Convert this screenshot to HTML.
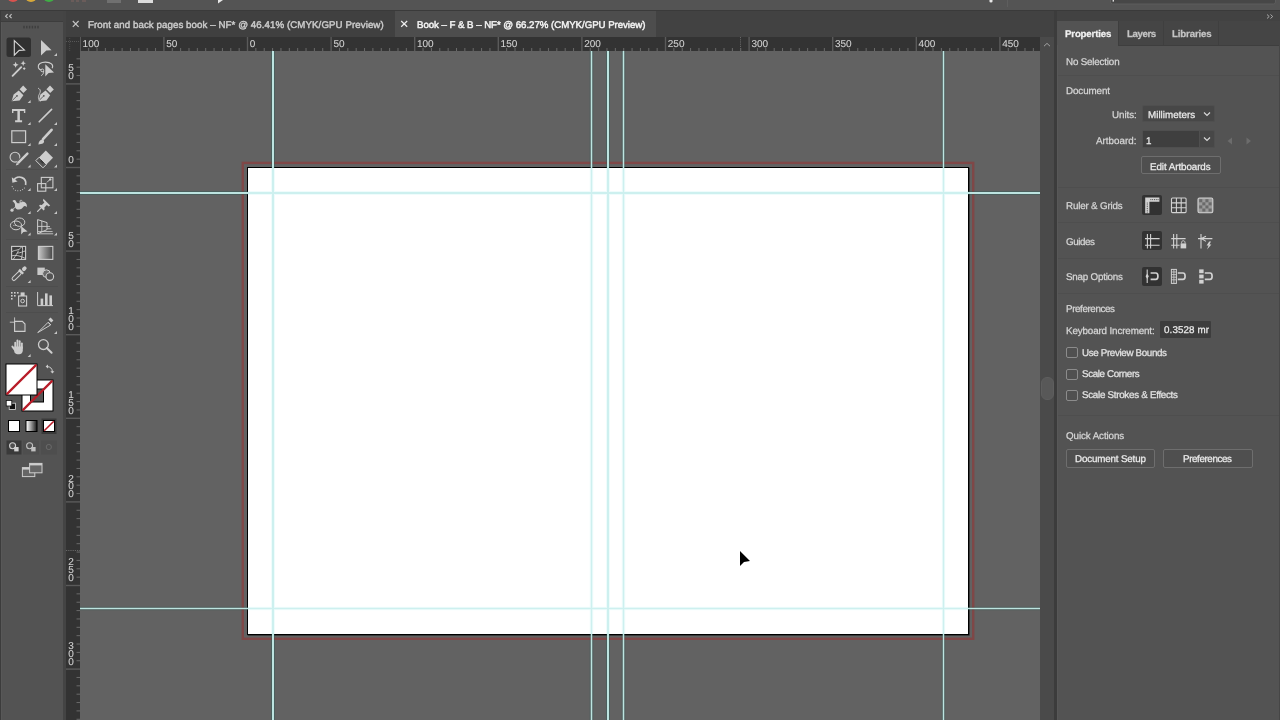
<!DOCTYPE html>
<html><head><meta charset="utf-8">
<style>
*{margin:0;padding:0;box-sizing:border-box}
html,body{width:1280px;height:720px;overflow:hidden;background:#535353;font-family:"Liberation Sans",sans-serif}
.a{position:absolute}
.rl{will-change:transform;text-rendering:geometricPrecision;font-family:"Liberation Sans",sans-serif;font-size:10px;fill:#d0d0d0;stroke:#d0d0d0;stroke-width:0.1px}
.t{position:absolute;will-change:transform;text-rendering:geometricPrecision;-webkit-text-stroke:0.25px currentColor;white-space:nowrap;color:#d8d8d8;font-size:9.5px;line-height:1}
.tb{font-weight:bold}
</style></head><body>

<!-- top app bar -->
<div class="a" style="left:0;top:0;width:1280px;height:11px;background:#545454"></div>
<div class="a" style="left:0;top:10px;width:1280px;height:1px;background:#3a3a3a"></div>
<div class="a" style="left:7px;top:-10px;width:12px;height:12px;border-radius:6px;background:#d9534f"></div>
<div class="a" style="left:25px;top:-10px;width:12px;height:12px;border-radius:6px;background:#d8a93a"></div>
<div class="a" style="left:43px;top:-10px;width:12px;height:12px;border-radius:6px;background:#3fae45"></div>

<!-- left toolbar panel -->
<div class="a" style="left:0;top:11px;width:1px;height:709px;background:#3c3c3c"></div>
<div class="a" style="left:1px;top:11px;width:62px;height:709px;background:#535353"></div>
<div class="a" style="left:1px;top:11px;width:62px;height:10px;background:#454545"></div>
<div class="a" style="left:1px;top:21px;width:62px;height:1px;background:#3d3d3d"></div>
<div class="a" style="left:63px;top:11px;width:3px;height:709px;background:#444444"></div>
<div class="a" style="left:1px;top:22px;width:1px;height:698px;background:#585858"></div>

<svg class="a" style="left:0;top:0" width="64" height="490"><path d="M7.6 14.2L5.6 16.2L7.6 18.2M11.6 14.2L9.6 16.2L11.6 18.2" stroke="#c4c4c4" stroke-width="1.1" fill="none"/>
<rect x="23.3" y="25.8" width="1.4" height="2.6" fill="#3e3e3e"/>
<rect x="26.1" y="25.8" width="1.4" height="2.6" fill="#3e3e3e"/>
<rect x="28.9" y="25.8" width="1.4" height="2.6" fill="#3e3e3e"/>
<rect x="31.7" y="25.8" width="1.4" height="2.6" fill="#3e3e3e"/>
<rect x="34.5" y="25.8" width="1.4" height="2.6" fill="#3e3e3e"/>
<rect x="37.3" y="25.8" width="1.4" height="2.6" fill="#3e3e3e"/>
<rect x="6.5" y="37.5" width="24.5" height="19.5" rx="2.5" fill="#303030"/>
<path d="M14.3 40.6L24.4 50.1L19.2 50.4L14.3 55.1Z" stroke="#d8d8d8" stroke-width="1.1" fill="none" stroke-linejoin="miter"/>
<path d="M41 40L51.6 50.2L46.3 50.5L41 55.6Z" fill="#cdcdcd"/>
<path d="M57 53L57 56L54 56Z" fill="#c4c4c4"/>
<path d="M12.6 75.8L21.2 67.2" stroke="#cdcdcd" stroke-width="1.9" stroke-linecap="round"/>
<path d="M15.6 61.8L16.5 63.9L18.6 64.8L16.5 65.7L15.6 67.8L14.7 65.7L12.6 64.8L14.7 63.9Z" fill="#cdcdcd"/>
<path d="M23.2 60.6L24 62.5L25.9 63.3L24 64.1L23.2 66L22.4 64.1L20.5 63.3L22.4 62.5Z" fill="#cdcdcd"/>
<rect x="23.2" y="67.6" width="2" height="2" fill="#cdcdcd" transform="rotate(45 24.2 68.6)"/>
<path d="M52.2 68.2C53.8 65 51 62.1 45.5 62.1C40.6 62.1 37.8 64.2 38.3 67.2C38.7 69.2 40.2 70 41.4 69.6" stroke="#cdcdcd" stroke-width="1.1" fill="none"/>
<circle cx="42.3" cy="70.4" r="1.4" fill="none" stroke="#cdcdcd" stroke-width="1"/><path d="M43.6 71C43.9 73 43 74.6 41.2 75.6" stroke="#cdcdcd" stroke-width="1" fill="none"/>
<path d="M45.3 64.2L45.3 76.4L48.6 73L54 72.4Z" fill="#cdcdcd"/>
<g transform="translate(0 0)"><path d="M11.6 101.2L13.6 94.4L18.8 90.6L23.4 95.2L19.6 100.4Z" fill="#cdcdcd"/><path d="M11.9 100.9L16.6 96.2" stroke="#535353" stroke-width="0.9"/><circle cx="17" cy="95.8" r="0.9" fill="#535353"/><path d="M19.6 89.2L23.2 85.6L27 89.4L23.4 93Z" fill="#cdcdcd"/></g>
<path d="M30.6 100L30.6 103L27.6 103Z" fill="#c4c4c4"/>
<g transform="translate(26.8 0)"><path d="M11.6 101.2L13.6 94.4L18.8 90.6L23.4 95.2L19.6 100.4Z" fill="#cdcdcd"/><path d="M11.9 100.9L16.6 96.2" stroke="#535353" stroke-width="0.9"/><circle cx="17" cy="95.8" r="0.9" fill="#535353"/><path d="M19.6 89.2L23.2 85.6L27 89.4L23.4 93Z" fill="#cdcdcd"/></g>
<path d="M38.2 88.2C41 89.5 40.6 92 39.2 94.5C37.6 97.3 38.6 100 40.8 101.2" stroke="#cdcdcd" stroke-width="1" fill="none"/>
<path d="M12 109H25.3V113H23.9V111.1H19.9V120.3H22.1V122.2H15.1V120.3H17.4V111.1H13.4V113H12Z" fill="#cdcdcd"/>
<path d="M30.6 122L30.6 125L27.6 125Z" fill="#c4c4c4"/>
<path d="M39.2 121.8L51.6 109.4" stroke="#cdcdcd" stroke-width="1.6" stroke-linecap="round"/>
<path d="M57 122L57 125L54 125Z" fill="#c4c4c4"/>
<rect x="11.8" y="130.8" width="13.8" height="11.8" fill="#5e5e5e" stroke="#cdcdcd" stroke-width="1.2"/>
<path d="M30.6 143L30.6 146L27.6 146Z" fill="#c4c4c4"/>
<path d="M43 139.2L51.6 129.8" stroke="#cdcdcd" stroke-width="2.6" stroke-linecap="round"/>
<path d="M38.4 144.4C38.6 141.6 40.4 139.2 42.6 139.6C44.4 140.1 44.6 142.2 43.2 143.3C41.9 144.2 40 144.3 38.4 144.4Z" fill="#cdcdcd"/>
<path d="M57 143L57 146L54 146Z" fill="#c4c4c4"/>
<circle cx="15" cy="157.2" r="4.9" fill="#5e5e5e" stroke="#cdcdcd" stroke-width="1.1"/>
<path d="M18.4 162.6L27.4 153.6" stroke="#535353" stroke-width="4.2"/>
<path d="M18.4 162.6L27.4 153.6" stroke="#cdcdcd" stroke-width="2.4" stroke-linecap="round"/>
<path d="M15.8 165.6L16.8 162.4L18.8 164.4Z" fill="#cdcdcd"/>
<path d="M30.6 164.5L30.6 167.5L27.6 167.5Z" fill="#c4c4c4"/>
<path d="M45.8 150.6L53 157.8L46.4 164.4L39.2 157.2Z" fill="#cdcdcd"/>
<path d="M41.6 159.6L44.2 162.2L42.6 163.8L40 161.2Z" fill="#3a3a3a"/>
<path d="M39.2 157.2L46.4 164.4L43 167.8L35.8 160.6Z" fill="none" stroke="#cdcdcd" stroke-width="1"/>
<path d="M57 164.5L57 167.5L54 167.5Z" fill="#c4c4c4"/>
<rect x="6" y="169" width="52" height="1" fill="#4d4d4d"/>
<path d="M13.6 180.2C15.4 177.4 19 176.4 22 177.6C25 178.8 26.2 182 25.6 185" stroke="#cdcdcd" stroke-width="1.7" fill="none"/>
<path d="M11.8 177.2L12.4 182.8L17.6 181.4Z" fill="#cdcdcd"/>
<circle cx="12.2" cy="186.6" r="0.55" fill="#cdcdcd"/>
<circle cx="13.4" cy="188.8" r="0.55" fill="#cdcdcd"/>
<circle cx="15.4" cy="190.2" r="0.55" fill="#cdcdcd"/>
<circle cx="17.8" cy="190.8" r="0.55" fill="#cdcdcd"/>
<circle cx="20.4" cy="190.6" r="0.55" fill="#cdcdcd"/>
<circle cx="22.6" cy="189.6" r="0.55" fill="#cdcdcd"/>
<circle cx="24.4" cy="188" r="0.55" fill="#cdcdcd"/>
<path d="M30.6 188L30.6 191L27.6 191Z" fill="#c4c4c4"/>
<rect x="41.3" y="177.4" width="11.6" height="10.4" fill="none" stroke="#cdcdcd" stroke-width="1.1"/>
<rect x="37.6" y="183.6" width="8.2" height="7.6" fill="none" stroke="#cdcdcd" stroke-width="1.1"/>
<path d="M47 182.4L50.2 179.2" stroke="#cdcdcd" stroke-width="1"/><circle cx="50.2" cy="179.4" r="1.2" fill="#cdcdcd"/>
<path d="M57 188L57 191L54 191Z" fill="#c4c4c4"/>
<path d="M12.4 201C13.6 199.6 15.4 199.8 16 201.2C16.6 202.6 17.4 203.6 19 203.4C21 203 22.4 201.4 24.4 202C26.6 202.8 27.4 205.4 26.6 207.2C25.6 205.6 24.2 205.6 23.4 206.8C22.4 208.6 20.4 210 17.4 209.4C15.4 208.8 14.6 206.6 15 205C15.2 203.4 14 202.4 12.4 201Z" fill="#cdcdcd"/>
<circle cx="12" cy="210.2" r="1.6" fill="#cdcdcd"/><path d="M12 210.2L21 201.6" stroke="#cdcdcd" stroke-width="0.9"/><circle cx="21" cy="201.4" r="1.2" fill="none" stroke="#cdcdcd" stroke-width="0.7"/>
<path d="M30.6 211L30.6 214L27.6 214Z" fill="#c4c4c4"/>
<path d="M43.4 198.8L50.2 205.6L48.6 206.4L46.8 205L44.4 207.6L44.6 209.4L43.6 210.4L39 205.8L40 204.8L41.8 205L44.4 202.6L43 200.8Z" fill="#cdcdcd"/>
<path d="M37.6 211.4L41.6 207.4" stroke="#cdcdcd" stroke-width="1.3" stroke-linecap="round"/>
<path d="M57 211L57 214L54 214Z" fill="#c4c4c4"/>
<ellipse cx="16" cy="225.4" rx="5.6" ry="4.4" fill="none" stroke="#cdcdcd" stroke-width="1"/>
<ellipse cx="19.6" cy="222.2" rx="5.2" ry="4.2" fill="none" stroke="#cdcdcd" stroke-width="1"/>
<path d="M13.4 225.4H16.2M14.6 225.4" stroke="#cdcdcd" stroke-width="1" stroke-dasharray="1 0.8"/>
<path d="M21.2 226.2L21.2 234.4L23.4 232L27.6 231.6Z" fill="#cdcdcd"/>
<path d="M30.6 232.5L30.6 235.5L27.6 235.5Z" fill="#c4c4c4"/>
<path d="M37.6 219.6L47 222.6V229.6L37.6 233.8Z" fill="none" stroke="#cdcdcd" stroke-width="1"/>
<path d="M41.8 221V232M37.6 226.4H47M47 226.6H50M47 228.8H51.4M38 231.6H52.6M37.6 233.8H53.2" stroke="#cdcdcd" stroke-width="0.9"/>
<path d="M57 232.5L57 235.5L54 235.5Z" fill="#c4c4c4"/>
<rect x="6" y="239" width="52" height="1" fill="#4d4d4d"/>
<rect x="11.6" y="246.4" width="14" height="13" fill="#3c3c3c" stroke="#cdcdcd" stroke-width="1.1"/>
<path d="M12 251.6C15 249.6 19 251 21.4 247M13.4 259C15.6 256 17.2 252.8 18.6 250.6M12 255.8C15.6 254.8 19.6 255.6 25.4 258.4M22.4 246.8C23 250.8 22.2 255 21.4 259.2M17 253C20 253.2 23 251.6 25.6 250.8" stroke="#cdcdcd" stroke-width="0.9" fill="none"/>
<defs><linearGradient id="gr" x1="0" y1="0" x2="1" y2="0"><stop offset="0" stop-color="#c8c8c8"/><stop offset="1" stop-color="#444"/></linearGradient></defs>
<rect x="38.4" y="246.4" width="14.4" height="13" fill="url(#gr)" stroke="#cdcdcd" stroke-width="1.1"/>
<rect x="11" y="274.2" width="11.2" height="3.6" rx="1.8" transform="rotate(-45 16.6 276)" fill="none" stroke="#cdcdcd" stroke-width="1"/>
<rect x="19.9" y="268.8" width="2.4" height="5.8" transform="rotate(-45 21.1 271.7)" fill="#cdcdcd"/>
<rect x="21.8" y="266.8" width="5" height="3.8" rx="1.9" transform="rotate(-45 24.3 268.7)" fill="#cdcdcd"/>
<path d="M30.6 280L30.6 283L27.6 283Z" fill="#c4c4c4"/>
<rect x="37.4" y="267.6" width="7.4" height="7.4" fill="#c8c8c8"/>
<circle cx="46.4" cy="273.6" r="3.8" fill="#6a6a6a" stroke="#cdcdcd" stroke-width="1"/>
<circle cx="49.8" cy="276.6" r="3.8" fill="#535353" stroke="#cdcdcd" stroke-width="1.1"/>
<rect x="6" y="286" width="52" height="1" fill="#4d4d4d"/>
<rect x="11" y="292" width="1.6" height="1.6" fill="#cdcdcd"/>
<rect x="14" y="292" width="1.6" height="1.6" fill="#cdcdcd"/>
<rect x="17" y="292" width="1.6" height="1.6" fill="#cdcdcd"/>
<rect x="11" y="295" width="1.6" height="1.6" fill="#cdcdcd"/>
<rect x="14" y="295" width="1.6" height="1.6" fill="#cdcdcd"/>
<rect x="11" y="298" width="1.6" height="1.6" fill="#cdcdcd"/>
<rect x="18.6" y="296" width="8" height="10" fill="none" stroke="#cdcdcd" stroke-width="1.1"/><rect x="20.6" y="292.4" width="4" height="3.6" fill="#cdcdcd"/><circle cx="22.6" cy="301" r="1.8" fill="none" stroke="#cdcdcd" stroke-width="1"/>
<path d="M37.6 292V305.6H53" stroke="#cdcdcd" stroke-width="1" fill="none"/>
<rect x="40.6" y="298.6" width="2.6" height="7" fill="#cdcdcd"/><rect x="45" y="293.4" width="2.6" height="12.2" fill="#cdcdcd"/><rect x="49.4" y="295.4" width="2.6" height="10.2" fill="#cdcdcd"/>
<rect x="6" y="312" width="52" height="1" fill="#4d4d4d"/>
<path d="M14.6 317.4V322.6M9.8 322.2H14.8" stroke="#cdcdcd" stroke-width="0.9"/>
<path d="M14.6 321.4H22.4L25 324V331.4H14.6Z" fill="#5e5e5e" stroke="#cdcdcd" stroke-width="1.1"/>
<path d="M37.8 332.6L48 322.4L50.6 325L37.8 332.6Z" fill="none" stroke="#cdcdcd" stroke-width="1"/><path d="M48.4 319.6L50.6 317.6L53.4 320.4L51.2 322.6Z" fill="#cdcdcd"/><path d="M48.2 322.2L51 325" stroke="#cdcdcd"/>
<path d="M57 331L57 334L54 334Z" fill="#c4c4c4"/>
<rect x="14.3" y="341.8" width="1.9" height="7.2" rx="0.95" fill="#cdcdcd"/>
<rect x="16.5" y="339.6" width="1.9" height="9.4" rx="0.95" fill="#cdcdcd"/>
<rect x="18.7" y="340.2" width="1.9" height="8.8" rx="0.95" fill="#cdcdcd"/>
<rect x="20.9" y="342.4" width="1.9" height="6.6" rx="0.95" fill="#cdcdcd"/>
<path d="M14.3 346.5H22.8V350.4C22.8 352.6 21.2 354.2 19.2 354.2H17.4C16 354.2 15 353.4 14.3 352Z" fill="#cdcdcd"/>
<path d="M12.4 346.6L15.4 350.6" stroke="#cdcdcd" stroke-width="1.9" stroke-linecap="round"/>
<path d="M22.6 349.4L24 346" stroke="#cdcdcd" stroke-width="0.01"/>
<path d="M30.6 354L30.6 357L27.6 357Z" fill="#c4c4c4"/>
<circle cx="43.4" cy="344.6" r="4.9" fill="none" stroke="#cdcdcd" stroke-width="1.3"/><path d="M46.8 348L51.6 352.8" stroke="#cdcdcd" stroke-width="2" stroke-linecap="round"/>
<rect x="21.5" y="379.5" width="32" height="32" fill="#000"/>
<rect x="22.5" y="380.5" width="30" height="30" fill="#fff"/>
<rect x="30" y="388.5" width="14" height="14" fill="#000"/>
<rect x="31" y="389.5" width="12" height="12" fill="#555"/>
<path d="M22.6 410.4L52.4 380.6" stroke="#b81c28" stroke-width="2.2"/>
<rect x="5.5" y="363.5" width="32" height="32" fill="#000"/>
<rect x="6.5" y="364.5" width="30" height="30" fill="#fff"/>
<path d="M6.6 394.4L36.4 364.6" stroke="#b81c28" stroke-width="2.2"/>
<path d="M47 366.6C50.4 366.6 52.4 368.6 52.4 372" stroke="#cdcdcd" stroke-width="1" fill="none"/><path d="M45.6 366.6L48 364.6V368.6Z" fill="#cdcdcd"/><path d="M52.4 373.6L50.4 371.2H54.4Z" fill="#cdcdcd"/>
<rect x="9.2" y="403.2" width="6.2" height="6.2" fill="#111" stroke="#ddd" stroke-width="0.8"/>
<rect x="6.2" y="400.4" width="5.6" height="5.6" fill="#fff" stroke="#111" stroke-width="0.8"/>
<rect x="41.5" y="418.5" width="15" height="15.5" fill="#3a3a3a"/>
<rect x="8" y="420" width="12" height="12" fill="#000"/><rect x="9" y="421" width="10" height="10" fill="#fff"/>
<defs><linearGradient id="g2" x1="0" y1="0" x2="1" y2="0"><stop offset="0" stop-color="#fff"/><stop offset="1" stop-color="#222"/></linearGradient></defs>
<rect x="25.5" y="420" width="12" height="12" fill="#000"/><rect x="26.5" y="421" width="10" height="10" fill="url(#g2)"/>
<rect x="43" y="420" width="12" height="12" fill="#000"/><rect x="44" y="421" width="10" height="10" fill="#fff"/><path d="M44.2 430.8L53.8 421.2" stroke="#b81c28" stroke-width="1.6"/>
<rect x="6.5" y="440.5" width="15" height="14" fill="#3a3a3a"/>
<rect x="23" y="440.5" width="16" height="14" fill="#4e4e4e"/>
<rect x="41" y="440.5" width="16" height="14" fill="#4e4e4e"/>
<circle cx="12.6" cy="445.8" r="3" fill="#505050" stroke="#d0d0d0" stroke-width="1.1"/><rect x="14.2" y="447" width="4.4" height="4.4" fill="#d0d0d0"/>
<circle cx="29.6" cy="445.8" r="3" fill="#505050" stroke="#c0c0c0" stroke-width="1.1"/><rect x="31.2" y="447" width="4.4" height="4.4" fill="#c0c0c0"/>
<circle cx="48.8" cy="447" r="2.6" fill="none" stroke="#6a6a6a" stroke-width="1"/>
<rect x="22.4" y="467.6" width="12.4" height="9" fill="#666" stroke="#cdcdcd" stroke-width="1"/><rect x="22.4" y="467.6" width="12.4" height="2" fill="#cdcdcd"/>
<rect x="29.6" y="463.4" width="12.4" height="9.4" fill="#666" stroke="#cdcdcd" stroke-width="1"/><rect x="29.6" y="463.4" width="12.4" height="2" fill="#cdcdcd"/></svg>
<!-- tab bar -->
<div class="a" style="left:66px;top:11px;width:988px;height:26px;background:#424242"></div>
<div class="a" style="left:66px;top:11px;width:329px;height:26px;background:#404040"></div>
<div class="a" style="left:395px;top:11px;width:261px;height:26px;background:#4d4d4d"></div>

<!-- ruler corner + rulers -->
<div class="a" style="left:66px;top:37px;width:974px;height:14px;background:#333333"></div>
<div class="a" style="left:66px;top:51px;width:14px;height:669px;background:#333333"></div>
<svg class="a" style="left:80px;top:37px" width="960" height="14"><rect x="-0.40" y="0" width="1.4" height="14" fill="#5a5a5a"/>
<text x="2.60" y="10.4" class="rl">100</text>
<rect x="8.16" y="11" width="1" height="3" fill="#6a6a6a"/>
<rect x="16.52" y="11" width="1" height="3" fill="#6a6a6a"/>
<rect x="24.88" y="11" width="1" height="3" fill="#6a6a6a"/>
<rect x="33.24" y="11" width="1" height="3" fill="#6a6a6a"/>
<rect x="41.60" y="11" width="1" height="3" fill="#6a6a6a"/>
<rect x="49.96" y="11" width="1" height="3" fill="#6a6a6a"/>
<rect x="58.32" y="11" width="1" height="3" fill="#6a6a6a"/>
<rect x="66.68" y="11" width="1" height="3" fill="#6a6a6a"/>
<rect x="75.04" y="11" width="1" height="3" fill="#6a6a6a"/>
<rect x="83.20" y="0" width="1.4" height="14" fill="#5a5a5a"/>
<text x="86.20" y="10.4" class="rl">50</text>
<rect x="91.76" y="11" width="1" height="3" fill="#6a6a6a"/>
<rect x="100.12" y="11" width="1" height="3" fill="#6a6a6a"/>
<rect x="108.48" y="11" width="1" height="3" fill="#6a6a6a"/>
<rect x="116.84" y="11" width="1" height="3" fill="#6a6a6a"/>
<rect x="125.20" y="11" width="1" height="3" fill="#6a6a6a"/>
<rect x="133.56" y="11" width="1" height="3" fill="#6a6a6a"/>
<rect x="141.92" y="11" width="1" height="3" fill="#6a6a6a"/>
<rect x="150.28" y="11" width="1" height="3" fill="#6a6a6a"/>
<rect x="158.64" y="11" width="1" height="3" fill="#6a6a6a"/>
<rect x="166.80" y="0" width="1.4" height="14" fill="#5a5a5a"/>
<text x="169.80" y="10.4" class="rl">0</text>
<rect x="175.36" y="11" width="1" height="3" fill="#6a6a6a"/>
<rect x="183.72" y="11" width="1" height="3" fill="#6a6a6a"/>
<rect x="192.08" y="11" width="1" height="3" fill="#6a6a6a"/>
<rect x="200.44" y="11" width="1" height="3" fill="#6a6a6a"/>
<rect x="208.80" y="11" width="1" height="3" fill="#6a6a6a"/>
<rect x="217.16" y="11" width="1" height="3" fill="#6a6a6a"/>
<rect x="225.52" y="11" width="1" height="3" fill="#6a6a6a"/>
<rect x="233.88" y="11" width="1" height="3" fill="#6a6a6a"/>
<rect x="242.24" y="11" width="1" height="3" fill="#6a6a6a"/>
<rect x="250.40" y="0" width="1.4" height="14" fill="#5a5a5a"/>
<text x="253.40" y="10.4" class="rl">50</text>
<rect x="258.96" y="11" width="1" height="3" fill="#6a6a6a"/>
<rect x="267.32" y="11" width="1" height="3" fill="#6a6a6a"/>
<rect x="275.68" y="11" width="1" height="3" fill="#6a6a6a"/>
<rect x="284.04" y="11" width="1" height="3" fill="#6a6a6a"/>
<rect x="292.40" y="11" width="1" height="3" fill="#6a6a6a"/>
<rect x="300.76" y="11" width="1" height="3" fill="#6a6a6a"/>
<rect x="309.12" y="11" width="1" height="3" fill="#6a6a6a"/>
<rect x="317.48" y="11" width="1" height="3" fill="#6a6a6a"/>
<rect x="325.84" y="11" width="1" height="3" fill="#6a6a6a"/>
<rect x="334.00" y="0" width="1.4" height="14" fill="#5a5a5a"/>
<text x="337.00" y="10.4" class="rl">100</text>
<rect x="342.56" y="11" width="1" height="3" fill="#6a6a6a"/>
<rect x="350.92" y="11" width="1" height="3" fill="#6a6a6a"/>
<rect x="359.28" y="11" width="1" height="3" fill="#6a6a6a"/>
<rect x="367.64" y="11" width="1" height="3" fill="#6a6a6a"/>
<rect x="376.00" y="11" width="1" height="3" fill="#6a6a6a"/>
<rect x="384.36" y="11" width="1" height="3" fill="#6a6a6a"/>
<rect x="392.72" y="11" width="1" height="3" fill="#6a6a6a"/>
<rect x="401.08" y="11" width="1" height="3" fill="#6a6a6a"/>
<rect x="409.44" y="11" width="1" height="3" fill="#6a6a6a"/>
<rect x="417.60" y="0" width="1.4" height="14" fill="#5a5a5a"/>
<text x="420.60" y="10.4" class="rl">150</text>
<rect x="426.16" y="11" width="1" height="3" fill="#6a6a6a"/>
<rect x="434.52" y="11" width="1" height="3" fill="#6a6a6a"/>
<rect x="442.88" y="11" width="1" height="3" fill="#6a6a6a"/>
<rect x="451.24" y="11" width="1" height="3" fill="#6a6a6a"/>
<rect x="459.60" y="11" width="1" height="3" fill="#6a6a6a"/>
<rect x="467.96" y="11" width="1" height="3" fill="#6a6a6a"/>
<rect x="476.32" y="11" width="1" height="3" fill="#6a6a6a"/>
<rect x="484.68" y="11" width="1" height="3" fill="#6a6a6a"/>
<rect x="493.04" y="11" width="1" height="3" fill="#6a6a6a"/>
<rect x="501.20" y="0" width="1.4" height="14" fill="#5a5a5a"/>
<text x="504.20" y="10.4" class="rl">200</text>
<rect x="509.76" y="11" width="1" height="3" fill="#6a6a6a"/>
<rect x="518.12" y="11" width="1" height="3" fill="#6a6a6a"/>
<rect x="526.48" y="11" width="1" height="3" fill="#6a6a6a"/>
<rect x="534.84" y="11" width="1" height="3" fill="#6a6a6a"/>
<rect x="543.20" y="11" width="1" height="3" fill="#6a6a6a"/>
<rect x="551.56" y="11" width="1" height="3" fill="#6a6a6a"/>
<rect x="559.92" y="11" width="1" height="3" fill="#6a6a6a"/>
<rect x="568.28" y="11" width="1" height="3" fill="#6a6a6a"/>
<rect x="576.64" y="11" width="1" height="3" fill="#6a6a6a"/>
<rect x="584.80" y="0" width="1.4" height="14" fill="#5a5a5a"/>
<text x="587.80" y="10.4" class="rl">250</text>
<rect x="593.36" y="11" width="1" height="3" fill="#6a6a6a"/>
<rect x="601.72" y="11" width="1" height="3" fill="#6a6a6a"/>
<rect x="610.08" y="11" width="1" height="3" fill="#6a6a6a"/>
<rect x="618.44" y="11" width="1" height="3" fill="#6a6a6a"/>
<rect x="626.80" y="11" width="1" height="3" fill="#6a6a6a"/>
<rect x="635.16" y="11" width="1" height="3" fill="#6a6a6a"/>
<rect x="643.52" y="11" width="1" height="3" fill="#6a6a6a"/>
<rect x="651.88" y="11" width="1" height="3" fill="#6a6a6a"/>
<rect x="660.24" y="11" width="1" height="3" fill="#6a6a6a"/>
<rect x="668.40" y="0" width="1.4" height="14" fill="#5a5a5a"/>
<text x="671.40" y="10.4" class="rl">300</text>
<rect x="676.96" y="11" width="1" height="3" fill="#6a6a6a"/>
<rect x="685.32" y="11" width="1" height="3" fill="#6a6a6a"/>
<rect x="693.68" y="11" width="1" height="3" fill="#6a6a6a"/>
<rect x="702.04" y="11" width="1" height="3" fill="#6a6a6a"/>
<rect x="710.40" y="11" width="1" height="3" fill="#6a6a6a"/>
<rect x="718.76" y="11" width="1" height="3" fill="#6a6a6a"/>
<rect x="727.12" y="11" width="1" height="3" fill="#6a6a6a"/>
<rect x="735.48" y="11" width="1" height="3" fill="#6a6a6a"/>
<rect x="743.84" y="11" width="1" height="3" fill="#6a6a6a"/>
<rect x="752.00" y="0" width="1.4" height="14" fill="#5a5a5a"/>
<text x="755.00" y="10.4" class="rl">350</text>
<rect x="760.56" y="11" width="1" height="3" fill="#6a6a6a"/>
<rect x="768.92" y="11" width="1" height="3" fill="#6a6a6a"/>
<rect x="777.28" y="11" width="1" height="3" fill="#6a6a6a"/>
<rect x="785.64" y="11" width="1" height="3" fill="#6a6a6a"/>
<rect x="794.00" y="11" width="1" height="3" fill="#6a6a6a"/>
<rect x="802.36" y="11" width="1" height="3" fill="#6a6a6a"/>
<rect x="810.72" y="11" width="1" height="3" fill="#6a6a6a"/>
<rect x="819.08" y="11" width="1" height="3" fill="#6a6a6a"/>
<rect x="827.44" y="11" width="1" height="3" fill="#6a6a6a"/>
<rect x="835.60" y="0" width="1.4" height="14" fill="#5a5a5a"/>
<text x="838.60" y="10.4" class="rl">400</text>
<rect x="844.16" y="11" width="1" height="3" fill="#6a6a6a"/>
<rect x="852.52" y="11" width="1" height="3" fill="#6a6a6a"/>
<rect x="860.88" y="11" width="1" height="3" fill="#6a6a6a"/>
<rect x="869.24" y="11" width="1" height="3" fill="#6a6a6a"/>
<rect x="877.60" y="11" width="1" height="3" fill="#6a6a6a"/>
<rect x="885.96" y="11" width="1" height="3" fill="#6a6a6a"/>
<rect x="894.32" y="11" width="1" height="3" fill="#6a6a6a"/>
<rect x="902.68" y="11" width="1" height="3" fill="#6a6a6a"/>
<rect x="911.04" y="11" width="1" height="3" fill="#6a6a6a"/>
<rect x="919.20" y="0" width="1.4" height="14" fill="#5a5a5a"/>
<text x="922.20" y="10.4" class="rl">450</text>
<rect x="927.76" y="11" width="1" height="3" fill="#6a6a6a"/>
<rect x="936.12" y="11" width="1" height="3" fill="#6a6a6a"/>
<rect x="944.48" y="11" width="1" height="3" fill="#6a6a6a"/>
<rect x="952.84" y="11" width="1" height="3" fill="#6a6a6a"/>
<path d="M660.5 0V14" stroke="#666" stroke-width="1" stroke-dasharray="1.2 1"/></svg>
<svg class="a" style="left:65px;top:51px" width="15" height="669"><rect x="11.5" y="-1.04" width="3.5" height="1" fill="#6a6a6a"/>
<rect x="11.5" y="7.32" width="3.5" height="1" fill="#6a6a6a"/>
<rect x="11.5" y="15.68" width="3.5" height="1" fill="#6a6a6a"/>
<rect x="11.5" y="24.04" width="3.5" height="1" fill="#6a6a6a"/>
<rect x="1" y="32.20" width="14" height="1.4" fill="#5a5a5a"/>
<text x="3.2" y="20.40" class="rl">5</text>
<text x="3.2" y="28.30" class="rl">0</text>
<rect x="11.5" y="40.76" width="3.5" height="1" fill="#6a6a6a"/>
<rect x="11.5" y="49.12" width="3.5" height="1" fill="#6a6a6a"/>
<rect x="11.5" y="57.48" width="3.5" height="1" fill="#6a6a6a"/>
<rect x="11.5" y="65.84" width="3.5" height="1" fill="#6a6a6a"/>
<rect x="11.5" y="74.20" width="3.5" height="1" fill="#6a6a6a"/>
<rect x="11.5" y="82.56" width="3.5" height="1" fill="#6a6a6a"/>
<rect x="11.5" y="90.92" width="3.5" height="1" fill="#6a6a6a"/>
<rect x="11.5" y="99.28" width="3.5" height="1" fill="#6a6a6a"/>
<rect x="11.5" y="107.64" width="3.5" height="1" fill="#6a6a6a"/>
<rect x="1" y="115.80" width="14" height="1.4" fill="#5a5a5a"/>
<text x="3.2" y="111.90" class="rl">0</text>
<rect x="11.5" y="124.36" width="3.5" height="1" fill="#6a6a6a"/>
<rect x="11.5" y="132.72" width="3.5" height="1" fill="#6a6a6a"/>
<rect x="11.5" y="141.08" width="3.5" height="1" fill="#6a6a6a"/>
<rect x="11.5" y="149.44" width="3.5" height="1" fill="#6a6a6a"/>
<rect x="11.5" y="157.80" width="3.5" height="1" fill="#6a6a6a"/>
<rect x="11.5" y="166.16" width="3.5" height="1" fill="#6a6a6a"/>
<rect x="11.5" y="174.52" width="3.5" height="1" fill="#6a6a6a"/>
<rect x="11.5" y="182.88" width="3.5" height="1" fill="#6a6a6a"/>
<rect x="11.5" y="191.24" width="3.5" height="1" fill="#6a6a6a"/>
<rect x="1" y="199.40" width="14" height="1.4" fill="#5a5a5a"/>
<text x="3.2" y="187.60" class="rl">5</text>
<text x="3.2" y="195.50" class="rl">0</text>
<rect x="11.5" y="207.96" width="3.5" height="1" fill="#6a6a6a"/>
<rect x="11.5" y="216.32" width="3.5" height="1" fill="#6a6a6a"/>
<rect x="11.5" y="224.68" width="3.5" height="1" fill="#6a6a6a"/>
<rect x="11.5" y="233.04" width="3.5" height="1" fill="#6a6a6a"/>
<rect x="11.5" y="241.40" width="3.5" height="1" fill="#6a6a6a"/>
<rect x="11.5" y="249.76" width="3.5" height="1" fill="#6a6a6a"/>
<rect x="11.5" y="258.12" width="3.5" height="1" fill="#6a6a6a"/>
<rect x="11.5" y="266.48" width="3.5" height="1" fill="#6a6a6a"/>
<rect x="11.5" y="274.84" width="3.5" height="1" fill="#6a6a6a"/>
<rect x="1" y="283.00" width="14" height="1.4" fill="#5a5a5a"/>
<text x="3.2" y="263.30" class="rl">1</text>
<text x="3.2" y="271.20" class="rl">0</text>
<text x="3.2" y="279.10" class="rl">0</text>
<rect x="11.5" y="291.56" width="3.5" height="1" fill="#6a6a6a"/>
<rect x="11.5" y="299.92" width="3.5" height="1" fill="#6a6a6a"/>
<rect x="11.5" y="308.28" width="3.5" height="1" fill="#6a6a6a"/>
<rect x="11.5" y="316.64" width="3.5" height="1" fill="#6a6a6a"/>
<rect x="11.5" y="325.00" width="3.5" height="1" fill="#6a6a6a"/>
<rect x="11.5" y="333.36" width="3.5" height="1" fill="#6a6a6a"/>
<rect x="11.5" y="341.72" width="3.5" height="1" fill="#6a6a6a"/>
<rect x="11.5" y="350.08" width="3.5" height="1" fill="#6a6a6a"/>
<rect x="11.5" y="358.44" width="3.5" height="1" fill="#6a6a6a"/>
<rect x="1" y="366.60" width="14" height="1.4" fill="#5a5a5a"/>
<text x="3.2" y="346.90" class="rl">1</text>
<text x="3.2" y="354.80" class="rl">5</text>
<text x="3.2" y="362.70" class="rl">0</text>
<rect x="11.5" y="375.16" width="3.5" height="1" fill="#6a6a6a"/>
<rect x="11.5" y="383.52" width="3.5" height="1" fill="#6a6a6a"/>
<rect x="11.5" y="391.88" width="3.5" height="1" fill="#6a6a6a"/>
<rect x="11.5" y="400.24" width="3.5" height="1" fill="#6a6a6a"/>
<rect x="11.5" y="408.60" width="3.5" height="1" fill="#6a6a6a"/>
<rect x="11.5" y="416.96" width="3.5" height="1" fill="#6a6a6a"/>
<rect x="11.5" y="425.32" width="3.5" height="1" fill="#6a6a6a"/>
<rect x="11.5" y="433.68" width="3.5" height="1" fill="#6a6a6a"/>
<rect x="11.5" y="442.04" width="3.5" height="1" fill="#6a6a6a"/>
<rect x="1" y="450.20" width="14" height="1.4" fill="#5a5a5a"/>
<text x="3.2" y="430.50" class="rl">2</text>
<text x="3.2" y="438.40" class="rl">0</text>
<text x="3.2" y="446.30" class="rl">0</text>
<rect x="11.5" y="458.76" width="3.5" height="1" fill="#6a6a6a"/>
<rect x="11.5" y="467.12" width="3.5" height="1" fill="#6a6a6a"/>
<rect x="11.5" y="475.48" width="3.5" height="1" fill="#6a6a6a"/>
<rect x="11.5" y="483.84" width="3.5" height="1" fill="#6a6a6a"/>
<rect x="11.5" y="492.20" width="3.5" height="1" fill="#6a6a6a"/>
<rect x="11.5" y="500.56" width="3.5" height="1" fill="#6a6a6a"/>
<rect x="11.5" y="508.92" width="3.5" height="1" fill="#6a6a6a"/>
<rect x="11.5" y="517.28" width="3.5" height="1" fill="#6a6a6a"/>
<rect x="11.5" y="525.64" width="3.5" height="1" fill="#6a6a6a"/>
<rect x="1" y="533.80" width="14" height="1.4" fill="#5a5a5a"/>
<text x="3.2" y="514.10" class="rl">2</text>
<text x="3.2" y="522.00" class="rl">5</text>
<text x="3.2" y="529.90" class="rl">0</text>
<rect x="11.5" y="542.36" width="3.5" height="1" fill="#6a6a6a"/>
<rect x="11.5" y="550.72" width="3.5" height="1" fill="#6a6a6a"/>
<rect x="11.5" y="559.08" width="3.5" height="1" fill="#6a6a6a"/>
<rect x="11.5" y="567.44" width="3.5" height="1" fill="#6a6a6a"/>
<rect x="11.5" y="575.80" width="3.5" height="1" fill="#6a6a6a"/>
<rect x="11.5" y="584.16" width="3.5" height="1" fill="#6a6a6a"/>
<rect x="11.5" y="592.52" width="3.5" height="1" fill="#6a6a6a"/>
<rect x="11.5" y="600.88" width="3.5" height="1" fill="#6a6a6a"/>
<rect x="11.5" y="609.24" width="3.5" height="1" fill="#6a6a6a"/>
<rect x="1" y="617.40" width="14" height="1.4" fill="#5a5a5a"/>
<text x="3.2" y="597.70" class="rl">3</text>
<text x="3.2" y="605.60" class="rl">0</text>
<text x="3.2" y="613.50" class="rl">0</text>
<rect x="11.5" y="625.96" width="3.5" height="1" fill="#6a6a6a"/>
<rect x="11.5" y="634.32" width="3.5" height="1" fill="#6a6a6a"/>
<rect x="11.5" y="642.68" width="3.5" height="1" fill="#6a6a6a"/>
<rect x="11.5" y="651.04" width="3.5" height="1" fill="#6a6a6a"/>
<rect x="11.5" y="659.40" width="3.5" height="1" fill="#6a6a6a"/>
<rect x="11.5" y="667.76" width="3.5" height="1" fill="#6a6a6a"/>
<path d="M1 499.5H15" stroke="#666" stroke-width="1" stroke-dasharray="1.2 1"/></svg>

<!-- canvas -->
<div class="a" style="left:80px;top:51px;width:960px;height:669px;background:#626262"></div>

<!-- scroll column -->
<div class="a" style="left:1040px;top:37px;width:14px;height:683px;background:#4a4a4a"></div>
<div class="a" style="left:1054px;top:11px;width:3px;height:709px;background:#3c3c3c"></div>

<!-- right panel -->
<div class="a" style="left:1057px;top:11px;width:223px;height:709px;background:#535353"></div>
<div class="a" style="left:1057px;top:11px;width:223px;height:10px;background:#424242"></div>
<div class="a" style="left:1057px;top:21px;width:223px;height:24px;background:#454545"></div>
<div class="a" style="left:1057px;top:21px;width:61px;height:25px;background:#535353"></div>


<!-- tab texts -->
<svg class="a" style="left:72px;top:20px" width="8" height="8"><path d="M0.8 1L6.6 6.8M6.6 1L0.8 6.8" stroke="#c4c4c4" stroke-width="1.2"/></svg>

<svg class="a" style="left:400px;top:20px" width="8" height="8"><path d="M1.2 1L7.2 6.8M7.2 1L1.2 6.8" stroke="#eeeeee" stroke-width="1.2"/></svg>


<!-- artboard -->
<svg class="a" style="left:0;top:0" width="1040" height="720"><rect x="242.8" y="162.9" width="730.4" height="475.9" fill="none" stroke="#7f4747" stroke-width="2.4"/></svg>
<div class="a" style="left:247px;top:167px;width:722px;height:468px;background:#000;box-shadow:0.6px 0.6px 0 #222"></div>
<div class="a" style="left:248px;top:168px;width:720px;height:466px;background:#fff"></div>

<!-- guides -->
<svg class="a" style="left:0;top:0" width="1040" height="720"><rect x="271.00" y="168.00" width="4.00" height="466.00" fill="#effcfc"/><rect x="271.00" y="51.00" width="1.00" height="117.00" fill="rgba(30,90,85,0.33)"/><rect x="274.00" y="51.00" width="1.00" height="117.00" fill="rgba(30,90,85,0.33)"/><rect x="271.00" y="634.00" width="1.00" height="86.00" fill="rgba(30,90,85,0.33)"/><rect x="274.00" y="634.00" width="1.00" height="86.00" fill="rgba(30,90,85,0.33)"/><rect x="589.75" y="168.00" width="3.50" height="466.00" fill="#effcfc"/><rect x="589.75" y="51.00" width="1.00" height="117.00" fill="rgba(30,90,85,0.33)"/><rect x="592.25" y="51.00" width="1.00" height="117.00" fill="rgba(30,90,85,0.33)"/><rect x="589.75" y="634.00" width="1.00" height="86.00" fill="rgba(30,90,85,0.33)"/><rect x="592.25" y="634.00" width="1.00" height="86.00" fill="rgba(30,90,85,0.33)"/><rect x="606.00" y="168.00" width="4.00" height="466.00" fill="#effcfc"/><rect x="606.00" y="51.00" width="1.00" height="117.00" fill="rgba(30,90,85,0.33)"/><rect x="609.00" y="51.00" width="1.00" height="117.00" fill="rgba(30,90,85,0.33)"/><rect x="606.00" y="634.00" width="1.00" height="86.00" fill="rgba(30,90,85,0.33)"/><rect x="609.00" y="634.00" width="1.00" height="86.00" fill="rgba(30,90,85,0.33)"/><rect x="621.75" y="168.00" width="3.50" height="466.00" fill="#effcfc"/><rect x="621.75" y="51.00" width="1.00" height="117.00" fill="rgba(30,90,85,0.33)"/><rect x="624.25" y="51.00" width="1.00" height="117.00" fill="rgba(30,90,85,0.33)"/><rect x="621.75" y="634.00" width="1.00" height="86.00" fill="rgba(30,90,85,0.33)"/><rect x="624.25" y="634.00" width="1.00" height="86.00" fill="rgba(30,90,85,0.33)"/><rect x="941.80" y="168.00" width="3.40" height="466.00" fill="#effcfc"/><rect x="941.80" y="51.00" width="1.00" height="117.00" fill="rgba(30,90,85,0.33)"/><rect x="944.20" y="51.00" width="1.00" height="117.00" fill="rgba(30,90,85,0.33)"/><rect x="941.80" y="634.00" width="1.00" height="86.00" fill="rgba(30,90,85,0.33)"/><rect x="944.20" y="634.00" width="1.00" height="86.00" fill="rgba(30,90,85,0.33)"/><rect x="248.00" y="191.00" width="720.00" height="4.00" fill="#effcfc"/><rect x="80.00" y="191.00" width="168.00" height="1.00" fill="rgba(30,90,85,0.33)"/><rect x="80.00" y="194.00" width="168.00" height="1.00" fill="rgba(30,90,85,0.33)"/><rect x="968.00" y="191.00" width="72.00" height="1.00" fill="rgba(30,90,85,0.33)"/><rect x="968.00" y="194.00" width="72.00" height="1.00" fill="rgba(30,90,85,0.33)"/><rect x="248.00" y="606.80" width="720.00" height="3.40" fill="#effcfc"/><rect x="80.00" y="606.80" width="168.00" height="1.00" fill="rgba(30,90,85,0.33)"/><rect x="80.00" y="609.20" width="168.00" height="1.00" fill="rgba(30,90,85,0.33)"/><rect x="968.00" y="606.80" width="72.00" height="1.00" fill="rgba(30,90,85,0.33)"/><rect x="968.00" y="609.20" width="72.00" height="1.00" fill="rgba(30,90,85,0.33)"/><rect x="272.00" y="168.00" width="2.00" height="466.00" fill="#cdf0ef"/><rect x="272.00" y="51.00" width="2.00" height="117.00" fill="#bde4e0"/><rect x="272.00" y="634.00" width="2.00" height="86.00" fill="#bde4e0"/><rect x="590.75" y="168.00" width="1.50" height="466.00" fill="#cdf0ef"/><rect x="590.75" y="51.00" width="1.50" height="117.00" fill="#bde4e0"/><rect x="590.75" y="634.00" width="1.50" height="86.00" fill="#bde4e0"/><rect x="607.00" y="168.00" width="2.00" height="466.00" fill="#cdf0ef"/><rect x="607.00" y="51.00" width="2.00" height="117.00" fill="#bde4e0"/><rect x="607.00" y="634.00" width="2.00" height="86.00" fill="#bde4e0"/><rect x="622.75" y="168.00" width="1.50" height="466.00" fill="#cdf0ef"/><rect x="622.75" y="51.00" width="1.50" height="117.00" fill="#bde4e0"/><rect x="622.75" y="634.00" width="1.50" height="86.00" fill="#bde4e0"/><rect x="942.80" y="168.00" width="1.40" height="466.00" fill="#cdf0ef"/><rect x="942.80" y="51.00" width="1.40" height="117.00" fill="#bde4e0"/><rect x="942.80" y="634.00" width="1.40" height="86.00" fill="#bde4e0"/><rect x="248.00" y="192.00" width="720.00" height="2.00" fill="#cdf0ef"/><rect x="80.00" y="192.00" width="168.00" height="2.00" fill="#bde4e0"/><rect x="968.00" y="192.00" width="72.00" height="2.00" fill="#bde4e0"/><rect x="248.00" y="607.80" width="720.00" height="1.40" fill="#cdf0ef"/><rect x="80.00" y="607.80" width="168.00" height="1.40" fill="#bde4e0"/><rect x="968.00" y="607.80" width="72.00" height="1.40" fill="#bde4e0"/></svg>
<!-- cursor -->
<svg class="a" style="left:736px;top:548px" width="20" height="22"><path d="M4 3L4 18L8 14L14 13Z" fill="#000"/></svg>

<!-- scroll column details -->
<svg class="a" style="left:1040px;top:37px" width="14" height="14"><path d="M4 9.2L7 6.4L10 9.2" stroke="#a4a4a4" stroke-width="1" fill="none"/></svg>
<div class="a" style="left:1041px;top:377px;width:13px;height:23px;border-radius:6px;background:#585858;border:1px solid #5e5e5e"></div>

<div class="t" style="left:87.90px;top:21.00px;font-size:9.7px;letter-spacing:0.082px;color:#cacaca;-webkit-text-stroke:0.45px currentColor;">Front and back pages book – NF* @ 46.41% (CMYK/GPU Preview)</div>
<div class="t" style="left:416.50px;top:21.00px;font-size:9.7px;letter-spacing:-0.046px;color:#f4f4f4;-webkit-text-stroke:0.45px currentColor;">Book – F &amp; B – NF* @ 66.27% (CMYK/GPU Preview)</div>
<svg class="a" style="left:0;top:0" width="1280" height="11"><rect x="71" y="0" width="3" height="2" fill="#6a5c5a"/><rect x="76" y="0" width="3" height="2" fill="#6a5c5a"/><rect x="82" y="0" width="4" height="2" fill="#6a5c5a"/><rect x="107" y="0" width="14" height="3" fill="#707070"/><rect x="138" y="0" width="15" height="3" fill="#dcdcdc"/><path d="M218 0L223 0L218 3.5Z" fill="#e8e8e8"/><ellipse cx="991" cy="1" rx="1.6" ry="1.6" fill="#e8e8e8"/><rect x="1007" y="0" width="1" height="7" fill="#5e5e5e"/><rect x="1110.5" y="-2" width="165" height="6" rx="2" fill="#474747" stroke="#5c5c5c" stroke-width="1"/><rect x="1112.6" y="0" width="1.4" height="1.6" fill="#ddd"/></svg>
<svg class="a" style="left:65px;top:37px" width="15" height="14"><path d="M1 4.5H14" stroke="#575757" stroke-width="1" stroke-dasharray="1 1"/><path d="M4.7 1V14" stroke="#4e4e4e" stroke-width="1" stroke-dasharray="1 1"/></svg>
<div class="a" style="left:1057px;top:45px;width:1px;height:675px;background:#585858"></div>
<svg class="a" style="left:1264px;top:12px" width="12" height="9"><path d="M3 2.5L5.2 4.5L3 6.5M6.5 2.5L8.7 4.5L6.5 6.5" stroke="#b4b4b4" stroke-width="0.9" fill="none"/></svg>
<div class="a" style="left:1118px;top:21px;width:1px;height:24px;background:#3e3e3e"></div>
<div class="a" style="left:1163px;top:21px;width:1px;height:24px;background:#3f3f3f"></div>
<div class="a" style="left:1218px;top:21px;width:1px;height:24px;background:#3f3f3f"></div>
<div class="a" style="left:1118px;top:45px;width:162px;height:1px;background:#3e3e3e"></div>
<div class="t" style="left:1065.30px;top:30.00px;font-size:9.7px;letter-spacing:-0.175px;color:#f0f0f0;font-weight:bold;">Properties</div>
<div class="t" style="left:1126.60px;top:30.00px;font-size:9.7px;letter-spacing:-0.416px;color:#c4c4c4;font-weight:bold;">Layers</div>
<div class="t" style="left:1171.80px;top:30.00px;font-size:9.7px;letter-spacing:-0.147px;color:#c4c4c4;font-weight:bold;">Libraries</div>
<div class="a" style="left:1279px;top:45px;width:1px;height:675px;background:#464646"></div>
<div class="t" style="left:1065.60px;top:58.00px;font-size:9.8px;letter-spacing:-0.179px;color:#d6d6d6;">No Selection</div>
<div class="a" style="left:1058px;top:75px;width:221px;height:1px;background:#4e4e4e"></div>
<div class="t" style="left:1066.00px;top:87.00px;font-size:9.8px;letter-spacing:-0.095px;color:#d6d6d6;">Document</div>
<div class="t" style="left:1111.60px;top:111.00px;font-size:9.8px;letter-spacing:-0.070px;color:#d6d6d6;">Units:</div>
<div class="a" style="left:1142px;top:105px;width:73px;height:17px;background:#474747;border:1px solid #4f4f4f;border-radius:2px"></div>
<div class="t" style="left:1147.50px;top:111.00px;font-size:9.8px;letter-spacing:0.028px;color:#ececec;">Millimeters</div>
<svg class="a" style="left:1202px;top:110px" width="11" height="8"><path d="M2 2.5L5 5.5L8 2.5" stroke="#d8d8d8" stroke-width="1.2" fill="none"/></svg>
<div class="t" style="left:1095.80px;top:137.00px;font-size:9.8px;letter-spacing:0.024px;color:#d6d6d6;">Artboard:</div>
<div class="a" style="left:1142px;top:130px;width:73px;height:18px;background:#474747;border:1px solid #4f4f4f;border-radius:2px"></div>
<div class="a" style="left:1143px;top:131px;width:56px;height:16px;background:#3f3f3f"></div>
<div class="a" style="left:1199px;top:131px;width:1px;height:16px;background:#4f4f4f"></div>
<div class="t" style="left:1145.80px;top:137.00px;font-size:9.8px;letter-spacing:-1.450px;color:#ececec;">1</div>
<svg class="a" style="left:1202px;top:135px" width="11" height="8"><path d="M2 2.5L5 5.5L8 2.5" stroke="#d8d8d8" stroke-width="1.2" fill="none"/></svg>
<svg class="a" style="left:1225px;top:136px" width="30" height="10"><path d="M7 1.5L7 8.5L2.5 5Z" fill="#6c6c6c"/><path d="M21.5 1.5L21.5 8.5L26 5Z" fill="#6c6c6c"/></svg>
<div class="a" style="left:1141px;top:156px;width:80px;height:18px;border:1px solid #6e6e6e;border-radius:2px;background:#4f4f4f"></div>
<div class="t" style="left:1150.30px;top:163.00px;font-size:9.8px;letter-spacing:-0.069px;color:#ececec;">Edit Artboards</div>
<div class="a" style="left:1058px;top:187px;width:221px;height:1px;background:#4e4e4e"></div>
<div class="t" style="left:1065.70px;top:202.00px;font-size:9.8px;letter-spacing:-0.176px;color:#d6d6d6;">Ruler &amp; Grids</div>
<div class="a" style="left:1142px;top:195px;width:20px;height:20px;background:#323232;border-radius:2px"></div>
<div class="a" style="left:1058px;top:222px;width:221px;height:1px;background:#4e4e4e"></div>
<div class="t" style="left:1066.00px;top:238.00px;font-size:9.8px;letter-spacing:-0.410px;color:#d6d6d6;">Guides</div>
<div class="a" style="left:1142px;top:231px;width:20px;height:19px;background:#323232;border-radius:2px"></div>
<div class="a" style="left:1058px;top:258px;width:221px;height:1px;background:#4e4e4e"></div>
<div class="t" style="left:1066.00px;top:273.00px;font-size:9.8px;letter-spacing:-0.217px;color:#d6d6d6;">Snap Options</div>
<div class="a" style="left:1142px;top:267px;width:20px;height:19px;background:#323232;border-radius:2px"></div>
<div class="a" style="left:1058px;top:293px;width:221px;height:1px;background:#4e4e4e"></div>
<div class="t" style="left:1066.00px;top:305.00px;font-size:9.8px;letter-spacing:-0.384px;color:#d6d6d6;">Preferences</div>
<div class="t" style="left:1066.00px;top:327.00px;font-size:9.8px;letter-spacing:-0.126px;color:#d6d6d6;">Keyboard Increment:</div>
<div class="a" style="left:1160px;top:321px;width:51px;height:17px;background:#3d3d3d;border-radius:1px"></div>
<div class="t" style="left:1163.90px;top:326.00px;font-size:9.8px;letter-spacing:0.110px;color:#ececec;">0.3528 mr</div>
<div class="a" style="left:1066px;top:347px;width:12px;height:11px;border:1px solid #8c8c8c;border-radius:2px;background:#505050"></div>
<div class="t" style="left:1082.00px;top:349.00px;font-size:9.8px;letter-spacing:-0.351px;color:#e4e4e4;">Use Preview Bounds</div>
<div class="a" style="left:1066px;top:368.5px;width:12px;height:11px;border:1px solid #8c8c8c;border-radius:2px;background:#505050"></div>
<div class="t" style="left:1082.00px;top:370.00px;font-size:9.8px;letter-spacing:-0.366px;color:#e4e4e4;">Scale Corners</div>
<div class="a" style="left:1066px;top:390px;width:12px;height:11px;border:1px solid #8c8c8c;border-radius:2px;background:#505050"></div>
<div class="t" style="left:1082.00px;top:391.00px;font-size:9.8px;letter-spacing:-0.283px;color:#e4e4e4;">Scale Strokes &amp; Effects</div>
<div class="a" style="left:1058px;top:415px;width:221px;height:1px;background:#4e4e4e"></div>
<div class="t" style="left:1066.00px;top:432.00px;font-size:9.8px;letter-spacing:-0.093px;color:#d6d6d6;">Quick Actions</div>
<div class="a" style="left:1066px;top:449px;width:89px;height:19px;border:1px solid #6e6e6e;border-radius:2px;background:#4f4f4f"></div>
<div class="t" style="left:1074.70px;top:455.00px;font-size:9.8px;letter-spacing:-0.161px;color:#ececec;">Document Setup</div>
<div class="a" style="left:1163px;top:449px;width:90px;height:19px;border:1px solid #6e6e6e;border-radius:2px;background:#4f4f4f"></div>
<div class="t" style="left:1183.00px;top:455.00px;font-size:9.8px;letter-spacing:-0.384px;color:#ececec;">Preferences</div>
<svg class="a" style="left:0;top:0" width="1280" height="300"><path d="M1145.2 197.6H1159.4V201.8H1149.4V213.2H1145.2Z" fill="#d2d2d2"/>
<rect x="1150.4" y="199.2" width="0.9" height="0.9" fill="#333"/>
<rect x="1152.2" y="199.2" width="0.9" height="0.9" fill="#333"/>
<rect x="1154.0" y="199.2" width="0.9" height="0.9" fill="#333"/>
<rect x="1155.8" y="199.2" width="0.9" height="0.9" fill="#333"/>
<rect x="1157.6" y="199.2" width="0.9" height="0.9" fill="#333"/>
<rect x="1146.8" y="202.6" width="0.9" height="0.9" fill="#333"/>
<rect x="1146.8" y="204.4" width="0.9" height="0.9" fill="#333"/>
<rect x="1146.8" y="206.2" width="0.9" height="0.9" fill="#333"/>
<rect x="1146.8" y="208.0" width="0.9" height="0.9" fill="#333"/>
<rect x="1146.8" y="209.8" width="0.9" height="0.9" fill="#333"/>
<rect x="1146.8" y="211.6" width="0.9" height="0.9" fill="#333"/>
<rect x="1171.5" y="198" width="14.6" height="14.6" rx="1" fill="#444" stroke="#d2d2d2" stroke-width="1.1"/>
<path d="M1176.4 198V212.6M1181.2 198V212.6M1171.5 202.9H1186.1M1171.5 207.7H1186.1" stroke="#d2d2d2" stroke-width="1.1"/>
<rect x="1198" y="198" width="14.8" height="14.8" rx="1.5" fill="#9a9a9a" stroke="#d2d2d2" stroke-width="1.1"/>
<rect x="1199.2" y="199.2" width="3.1" height="3.1" fill="#6a6a6a"/>
<rect x="1205.4" y="199.2" width="3.1" height="3.1" fill="#6a6a6a"/>
<rect x="1202.3" y="202.3" width="3.1" height="3.1" fill="#6a6a6a"/>
<rect x="1208.5" y="202.3" width="3.1" height="3.1" fill="#6a6a6a"/>
<rect x="1199.2" y="205.4" width="3.1" height="3.1" fill="#6a6a6a"/>
<rect x="1205.4" y="205.4" width="3.1" height="3.1" fill="#6a6a6a"/>
<rect x="1202.3" y="208.5" width="3.1" height="3.1" fill="#6a6a6a"/>
<rect x="1208.5" y="208.5" width="3.1" height="3.1" fill="#6a6a6a"/>
<path d="M1147.4 234V248.4M1150.6 234V248.4M1145 238.6H1159.6M1145 245.2H1159.6" stroke="#d2d2d2" stroke-width="1.1"/>
<path d="M1173.6 234V248.4M1176.8 234V248.4M1171.2 238.6H1185.6M1171.2 245.2H1179.6" stroke="#d2d2d2" stroke-width="1.1"/>
<path d="M1181.6 243.4V242.4C1181.6 240.2 1185 240.2 1185 242.4V243.4" stroke="#d2d2d2" stroke-width="1" fill="none"/><rect x="1180.6" y="243.4" width="5.6" height="5" fill="#d2d2d2"/>
<path d="M1201 234V248.4M1198 238.6H1212.4M1201.4 238.6L1206 236.2M1201.4 238.6L1206 241.4" stroke="#d2d2d2" stroke-width="1.1"/>
<path d="M1209.2 241.6L1206.6 245.4H1208.6L1207 249.6L1211.4 244.4H1209.4L1211 241.6Z" fill="#d2d2d2"/>
<path d="M1147.2 269.4V283" stroke="#d2d2d2" stroke-width="1.1"/><path d="M1147.2 273.4L1148.8 276.2L1147.2 279L1145.6 276.2Z" fill="#d2d2d2"/>
<path d="M1150.6 273H1155.8C1158.6 273 1158.6 279.4 1155.8 279.4H1150.6" stroke="#d2d2d2" stroke-width="1.7" fill="none"/>
<rect x="1171.4" y="269.4" width="5" height="14" fill="none" stroke="#d2d2d2" stroke-width="1"/>
<path d="M1171.4 272H1176.4M1171.4 274.6H1176.4M1171.4 277.2H1176.4M1171.4 279.8H1176.4M1173.9 269.4V283.4" stroke="#d2d2d2" stroke-width="0.8"/>
<path d="M1177.8 273H1183.0C1185.8 273 1185.8 279.4 1183.0 279.4H1177.8" stroke="#d2d2d2" stroke-width="1.7" fill="none"/>
<rect x="1199.2" y="269.4" width="4.4" height="3.8" fill="#d2d2d2"/><rect x="1199.2" y="274.6" width="4.4" height="3.8" fill="#d2d2d2"/><rect x="1199.2" y="279.8" width="4.4" height="3.8" fill="#d2d2d2"/>
<path d="M1204.8 273H1210.0C1212.8 273 1212.8 279.4 1210.0 279.4H1204.8" stroke="#d2d2d2" stroke-width="1.7" fill="none"/></svg>
</body></html>
